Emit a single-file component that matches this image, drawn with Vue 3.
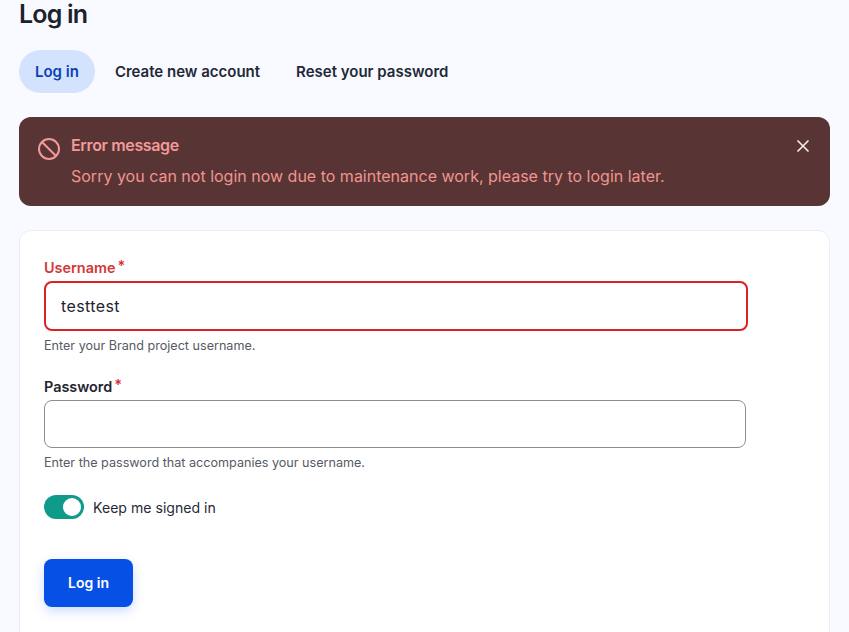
<template>
  <div class="page">
    <h1 class="title">Log in</h1>

    <nav class="tabs">
      <a v-for="tab in tabs" :key="tab.label" class="tab" :class="{ active: tab.active }">{{ tab.label }}</a>
    </nav>

    <div class="alert">
      <svg class="alert-icon" width="24" height="24" viewBox="0 0 24 24" fill="none" stroke="currentColor" stroke-width="2">
        <circle cx="12" cy="12" r="10" />
        <path d="M5 5l14 14" />
      </svg>
      <div class="alert-body">
        <div class="alert-title">Error message</div>
        <div class="alert-text">Sorry you can not login now due to maintenance work, please try to login later.</div>
      </div>
      <svg class="alert-close" width="14" height="14" viewBox="0 0 14 14" fill="none" stroke="currentColor" stroke-width="1.6">
        <path d="M1.5 1.5l11 11M12.5 1.5l-11 11" />
      </svg>
    </div>

    <form class="card" @submit.prevent>
      <div class="field">
        <label class="label error">Username<span class="req">*</span></label>
        <input class="input input-error" type="text" v-model="username" />
        <div class="help">Enter your Brand project username.</div>
      </div>

      <div class="field field-password">
        <label class="label">Password<span class="req">*</span></label>
        <input class="input" type="password" />
        <div class="help">Enter the password that accompanies your username.</div>
      </div>

      <div class="toggle-row">
        <span class="toggle"><span class="knob"></span></span>
        <span class="toggle-label">Keep me signed in</span>
      </div>

      <button class="submit" type="submit">Log in</button>
    </form>
  </div>
</template>

<script setup>
import { ref } from 'vue';

const username = ref('testtest');

const tabs = [
  { label: 'Log in', active: true },
  { label: 'Create new account', active: false },
  { label: 'Reset your password', active: false },
];
</script>

<style>
html,
body {
  margin: 0;
  background: #f9faff;
  height: 632px;
  overflow: hidden;
}
</style>

<style scoped>
.page {
  padding: 0 19px;
  font-family: Inter, "Liberation Sans", sans-serif;
  color: #1f2430;
}

.title {
  margin: 0;
  font-size: 25px;
  line-height: 29px;
  font-weight: 600;
  letter-spacing: -0.8px;
  color: #1c2130;
}

.tabs {
  display: flex;
  margin-top: 21px;
  gap: 4px;
}

.tab {
  padding: 0 16px;
  height: 43px;
  line-height: 43px;
  border-radius: 22px;
  font-size: 15px;
  font-weight: 600;
  color: #232838;
}

.tab.active {
  background: #d3e2fd;
  color: #0c3fb8;
}

.alert {
  display: flex;
  margin-top: 24px;
  height: 89px;
  box-sizing: border-box;
  padding: 18px 20px 0 18px;
  border-radius: 12px;
  background: #583434;
  color: #f29a9a;
}

.alert-icon {
  margin-top: 2px;
  flex: none;
}

.alert-body {
  margin-left: 10px;
  flex: 1;
}

.alert-title {
  font-size: 16px;
  line-height: 20px;
  font-weight: 600;
  letter-spacing: -0.35px;
}

.alert-text {
  margin-top: 11px;
  font-size: 16px;
  line-height: 20px;
  color: #f09490;
}

.alert-close {
  margin-top: 4px;
  flex: none;
  color: #f6f1f1;
}

.card {
  margin-top: 24px;
  height: 500px;
  box-sizing: border-box;
  padding: 27px 24px;
  background: #fff;
  border: 1px solid #eceef3;
  border-radius: 12px;
}

.field {
  width: 704px;
}

.field-password {
  width: 702px;
  margin-top: 23px;
}

.label {
  display: block;
  font-size: 14.4px;
  line-height: 20px;
  font-weight: 600;
  color: #1f2430;
}

.label.error {
  color: #d13838;
}

.req {
  position: relative;
  top: -2px;
  margin-left: 2px;
  color: #d92d3a;
}

.input {
  display: block;
  width: 100%;
  height: 48px;
  margin-top: 3px;
  box-sizing: border-box;
  padding: 0 16px;
  border: 1px solid #8a8d96;
  border-radius: 8px;
  outline: none;
  background: #fff;
  font-family: inherit;
  font-size: 16px;
  letter-spacing: 0.4px;
  color: #1f2430;
}

.input-error {
  height: 50px;
  border: 2px solid #d92323;
  padding: 0 15px;
}

.help {
  margin-top: 6px;
  font-size: 12.6px;
  line-height: 17px;
  color: #565b66;
}

.toggle-row {
  display: flex;
  align-items: flex-start;
  margin-top: 24px;
  gap: 9px;
}

.toggle {
  display: flex;
  align-items: center;
  justify-content: flex-end;
  width: 40px;
  height: 24px;
  padding-right: 3px;
  box-sizing: border-box;
  border-radius: 12px;
  background: #0f9b8a;
}

.knob {
  width: 18px;
  height: 18px;
  border-radius: 50%;
  background: #fff;
}

.toggle-label {
  padding-top: 1px;
  font-size: 14.1px;
  line-height: 24px;
  color: #262b38;
}

.submit {
  display: block;
  width: 89px;
  height: 48px;
  margin-top: 39px;
  padding: 0 0 2px;
  border: none;
  border-radius: 8px;
  background: #0650e6;
  box-shadow: 0 4px 12px rgba(6, 80, 230, 0.2);
  color: #fff;
  font-family: inherit;
  font-size: 14px;
  font-weight: 600;
}
</style>
